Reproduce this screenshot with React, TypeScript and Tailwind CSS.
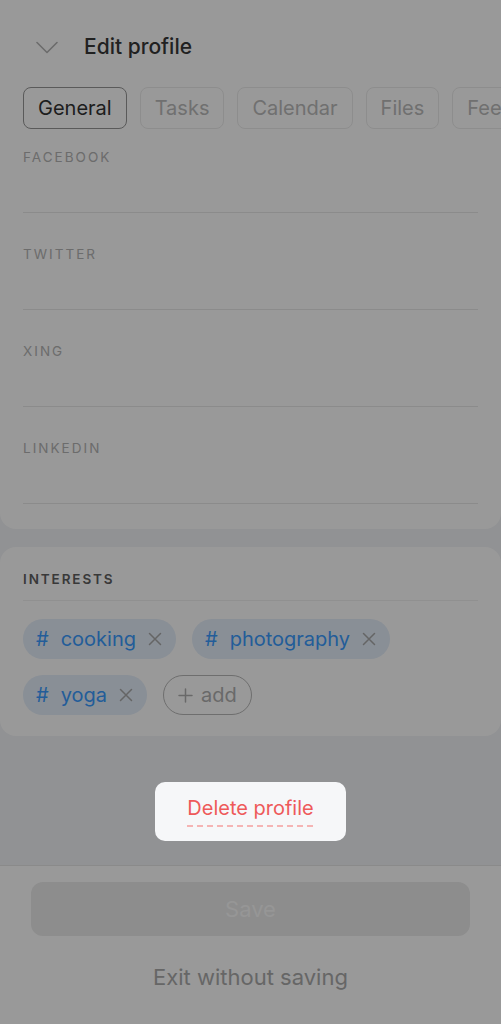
import React from "react";

const font = { fontFamily: "Inter, 'Noto Sans', sans-serif" };

const tabs = ["General", "Tasks", "Calendar", "Files", "Feed"];
const fields = ["Facebook", "Twitter", "Xing", "LinkedIn"];
const interests = ["cooking", "photography", "yoga"];

function Chevron() {
  return (
    <svg width="22" height="13" viewBox="0 0 22 13" fill="none">
      <path d="M1 1.5L11 11.5L21 1.5" stroke="#b4b4b4" strokeWidth="1.6" strokeLinecap="round" strokeLinejoin="round" />
    </svg>
  );
}

function Cross() {
  return (
    <svg width="14" height="14" viewBox="0 0 14 14" fill="none">
      <path d="M1.5 1.5L12.5 12.5M12.5 1.5L1.5 12.5" stroke="#a9a9a9" strokeWidth="1.5" strokeLinecap="round" />
    </svg>
  );
}

export default function App() {
  return (
    <div className="relative min-h-screen w-full bg-[#f2f4f7] antialiased" style={font}>
      <div className="rounded-b-2xl bg-white pb-[25px] pt-[27px]">
        <div className="flex h-10 items-center gap-[26px] px-[36px]">
          <Chevron />
          <h1 className="text-[21px] font-medium text-[#383838]">Edit profile</h1>
        </div>

        <div className="mt-5 flex gap-[13px] overflow-hidden px-[23px]">
          {tabs.map((t, i) => (
            <button
              key={t}
              className={
                i === 0
                  ? "h-[42px] shrink-0 rounded-lg border-[1.5px] border-[#969696] px-[14px] text-[20px] text-[#333]"
                  : "h-[42px] shrink-0 rounded-lg border-[1.5px] border-[#ececec] px-[14px] text-[20px] text-[#bbbbbb]"
              }
            >
              {t}
            </button>
          ))}
        </div>

        <div className="mt-[20px] flex flex-col gap-[33px] px-[23px]">
          {fields.map((f) => (
            <div key={f}>
              <div className="h-4 text-[13.5px] leading-4 uppercase tracking-[0.15em] text-[#b4b4b4]">{f}</div>
              <div className="h-12 border-b border-[#e8e8e8]" />
            </div>
          ))}
        </div>
      </div>

      <div className="mt-[18px] rounded-2xl bg-white px-[23px] pb-[21px] pt-6">
        <div className="h-4 text-[13.5px] font-semibold leading-4 uppercase tracking-[0.14em] text-[#606060]">
          Interests
        </div>
        <div className="mt-[13px] border-b border-[#f0f0f0]" />
        <div className="mt-[18px] flex flex-wrap gap-x-4 gap-y-4">
          {interests.map((tag) => (
            <div key={tag} className="flex h-10 items-center gap-3 rounded-full bg-[#e4eefa] pl-[13px] pr-[14px] text-[20px] text-[#3a9bff]">
              <span>#</span>
              <span>{tag}</span>
              <Cross />
            </div>
          ))}
          <div className="flex h-10 items-center gap-2 rounded-full border-[1.5px] border-[#b8b8b8] px-[14px] text-[20px] text-[#b0b0b0]">
            <svg width="15" height="15" viewBox="0 0 15 15" fill="none">
              <path d="M7.5 1V14M1 7.5H14" stroke="#b0b0b0" strokeWidth="1.5" strokeLinecap="round" />
            </svg>
            <span>add</span>
          </div>
        </div>
      </div>

      <div className="mt-[46px] flex justify-center">
        <button className="relative z-20 flex h-[59px] w-[191px] items-center justify-center rounded-[10px] bg-[#f6f7f9]">
          <span className="flex flex-col items-stretch">
            <span className="text-[20px] leading-6 text-[#ee5a5a]">Delete profile</span>
            <span className="mt-[5px] h-[1.5px] bg-[repeating-linear-gradient(90deg,#f5b4b4_0_6px,transparent_6px_10px)]" />
          </span>
        </button>
      </div>

      <div className="mt-6 border-t border-[#e6e6e6] bg-white px-[31px] pb-9 pt-4">
        <button className="h-[54px] w-full rounded-xl bg-[#ebebeb] text-[22px] text-[#fafafa]">Save</button>
        <div className="mt-[25px] text-center text-[22px] text-[#ababab]">Exit without saving</div>
      </div>

      <div className="fixed inset-0 z-10 bg-black/40" />
    </div>
  );
}
